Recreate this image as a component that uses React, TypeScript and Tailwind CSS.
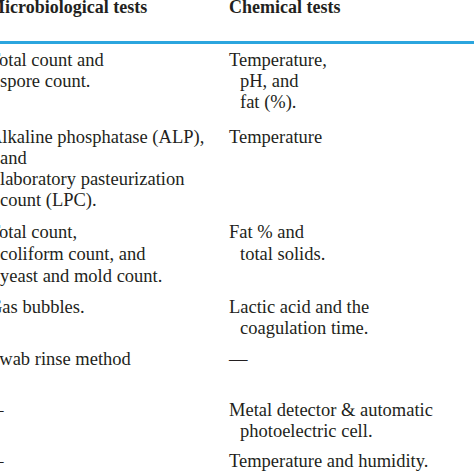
import React from "react";

type Row = { h: string; left: string[]; right: string[]; lead?: string };

const rows: Row[] = [
  { h: "h-[77px]", left: ["Total count and", "spore count."], right: ["Temperature,", "pH, and", "fat (%)."] },
  {
    h: "h-[94px]",
    left: ["Alkaline phosphatase (ALP),", "and", "laboratory pasteurization", "count (LPC)."],
    right: ["Temperature"],
  },
  {
    h: "h-[76px]",
    lead: "leading-[22px]",
    left: ["Total count,", "coliform count, and", "yeast and mold count."],
    right: ["Fat % and", "total solids."],
  },
  { h: "h-[52px]", left: ["Gas bubbles."], right: ["Lactic acid and the", "coagulation time."] },
  { h: "h-[51px]", left: ["Swab rinse method"], right: ["—"] },
  { h: "h-[51px]", left: ["—"], right: ["Metal detector & automatic", "photoelectric cell."] },
  { h: "h-[30px]", left: ["—"], right: ["Temperature and humidity."] },
];

function Cell({ lines, dash }: { lines: string[]; dash?: boolean }) {
  return (
    <div className={dash ? "flex flex-col -ml-[4px]" : "flex flex-col"}>
      {lines.map((l, i) => (
        <div key={i} className={i === 0 ? "whitespace-nowrap" : "whitespace-nowrap pl-[11px]"}>
          {l}
        </div>
      ))}
    </div>
  );
}

export default function App() {
  return (
    <div className="w-[474px] h-[474px] overflow-hidden bg-white text-[#231f20] font-['Liberation_Serif',serif]">
      <div className="flex flex-col -mt-[3px] -ml-[11px] w-[496px]">
        <div className="grid grid-cols-[240px_1fr] h-[44px] text-[18px] leading-[21px] font-bold">
          <div className="-ml-[1px] whitespace-nowrap">Microbiological tests</div>
          <div className="whitespace-nowrap">Chemical tests</div>
        </div>
        <div className="h-[3px] bg-[#2ba5de]" />
        {rows.map((r, i) => (
          <div
            key={i}
            className={`grid grid-cols-[240px_1fr] pt-[6px] text-[18.5px] ${r.lead ?? "leading-[21px]"} ${r.h}`}
          >
            <Cell lines={r.left} dash={r.left[0] === "—"} />
            <Cell lines={r.right} />
          </div>
        ))}
        <div className="h-[3px] bg-[#f1f5f7]" />
      </div>
    </div>
  );
}
